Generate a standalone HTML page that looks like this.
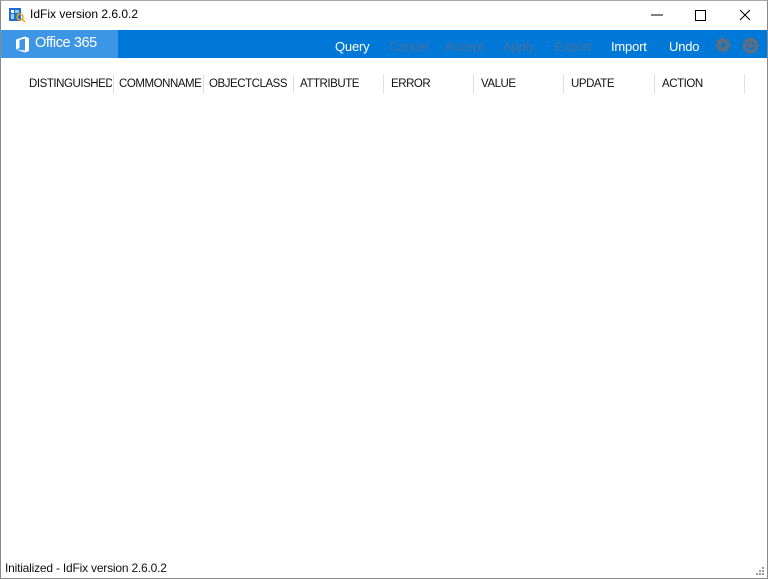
<!DOCTYPE html>
<html><head><style>
*{margin:0;padding:0;box-sizing:border-box}
body{width:768px;height:579px;overflow:hidden;background:#fff;font-family:"Liberation Sans","DejaVu Sans",sans-serif;position:relative}
.frame{position:absolute;left:0;top:0;width:768px;height:579px;border:1px solid #8a8a8a;border-top-color:#aaa}
.title{position:absolute;left:30px;top:7px;font-size:12px;color:#000}
.bar{position:absolute;left:1px;top:30px;width:766px;height:28px;background:#0078d7}
.o365{position:absolute;left:1px;top:30px;width:117px;height:28px;background:#3d95e6;color:#fff;font-size:14.5px}
.o365 span{position:absolute;left:34px;top:5px;letter-spacing:-0.4px}
.m{position:absolute;top:39px;font-size:13px;color:#fff;letter-spacing:-0.2px}
.d{color:#4a6f9c}
.h{position:absolute;top:78px;font-size:11.5px;color:#111;letter-spacing:-0.45px;white-space:nowrap;overflow:hidden;width:88px}
.sep{position:absolute;top:74px;width:1px;height:20px;background:#e0e0e0}
.status{position:absolute;left:5px;top:561px;font-size:12px;color:#111;letter-spacing:-0.2px}
</style></head><body>
<div class="frame"></div>
<svg style="position:absolute;left:8px;top:6px" width="18" height="18" viewBox="0 0 18 18">
<rect x="1" y="2" width="12" height="13" fill="#1e6fd0"/><rect x="3" y="4" width="3" height="3" fill="#fff"/><rect x="7" y="4" width="4" height="3" fill="#9cc8f5"/><rect x="3" y="8" width="3" height="5" fill="#9cc8f5"/>
<circle cx="12" cy="11" r="3" fill="none" stroke="#f0a020" stroke-width="1.5"/><line x1="14" y1="13" x2="17" y2="16" stroke="#f0a020" stroke-width="1.5"/></svg>
<div class="title">IdFix version 2.6.0.2</div>
<svg style="position:absolute;left:651px;top:8px" width="110" height="14">
<line x1="0" y1="7" x2="12" y2="7" stroke="#000"/>
<rect x="44.5" y="2.5" width="10" height="10" fill="none" stroke="#000"/>
<line x1="89" y1="2" x2="99" y2="12" stroke="#000"/><line x1="99" y1="2" x2="89" y2="12" stroke="#000"/></svg>
<div class="bar"></div>
<div class="o365">
<svg style="position:absolute;left:14px;top:6px" width="16" height="17" viewBox="0 0 16 17"><path d="M1 3.5 L10 0.5 L14 2 L14 15 L10 16.5 L1 13.5 L10 14.5 L10 2.5 L4.5 4 L4.5 12 L1 13.5 Z" fill="#fff"/></svg>
<span>Office 365</span></div>
<div class="m" style="left:335px">Query</div>
<div class="m d" style="left:389px">Cancel</div>
<div class="m d" style="left:445px">Accept</div>
<div class="m d" style="left:503px">Apply</div>
<div class="m d" style="left:555px">Export</div>
<div class="m" style="left:611px">Import</div>
<div class="m" style="left:669px">Undo</div>
<svg style="position:absolute;left:715px;top:37px" width="16" height="16" viewBox="0 0 16 16"><circle cx="8" cy="8" r="5" fill="none" stroke="#5a6e86" stroke-width="3"/><g stroke="#5a6e86" stroke-width="2.5"><line x1="8" y1="0.5" x2="8" y2="15.5"/><line x1="0.5" y1="8" x2="15.5" y2="8"/><line x1="2.7" y1="2.7" x2="13.3" y2="13.3"/><line x1="13.3" y1="2.7" x2="2.7" y2="13.3"/></g><circle cx="8" cy="8" r="2" fill="#0078d7"/></svg>
<svg style="position:absolute;left:742px;top:37px" width="17" height="17" viewBox="0 0 17 17"><circle cx="8.5" cy="8.5" r="8" fill="#5a6e86"/><circle cx="6" cy="6.5" r="1.2" fill="#0078d7"/><circle cx="11" cy="6.5" r="1.2" fill="#0078d7"/><path d="M4.5 10 Q8.5 14 12.5 10" stroke="#0078d7" stroke-width="1.4" fill="none"/></svg>
<div class="h" style="left:29px;width:83px">DISTINGUISHED</div><div class="sep" style="left:113px"></div>
<div class="h" style="left:119px;width:83px">COMMONNAME</div><div class="sep" style="left:203px"></div>
<div class="h" style="left:209px;width:83px">OBJECTCLASS</div><div class="sep" style="left:293px"></div>
<div class="h" style="left:300px">ATTRIBUTE</div><div class="sep" style="left:383px"></div>
<div class="h" style="left:391px">ERROR</div><div class="sep" style="left:473px"></div>
<div class="h" style="left:481px">VALUE</div><div class="sep" style="left:563px"></div>
<div class="h" style="left:571px">UPDATE</div><div class="sep" style="left:654px"></div>
<div class="h" style="left:662px">ACTION</div><div class="sep" style="left:744px"></div>
<div class="status">Initialized - IdFix version 2.6.0.2</div>
<svg style="position:absolute;left:755px;top:566px" width="10" height="10"><g fill="#999"><rect x="7" y="1" width="2" height="2"/><rect x="4" y="4" width="2" height="2"/><rect x="7" y="4" width="2" height="2"/><rect x="1" y="7" width="2" height="2"/><rect x="4" y="7" width="2" height="2"/><rect x="7" y="7" width="2" height="2"/></g></svg>
</body></html>
